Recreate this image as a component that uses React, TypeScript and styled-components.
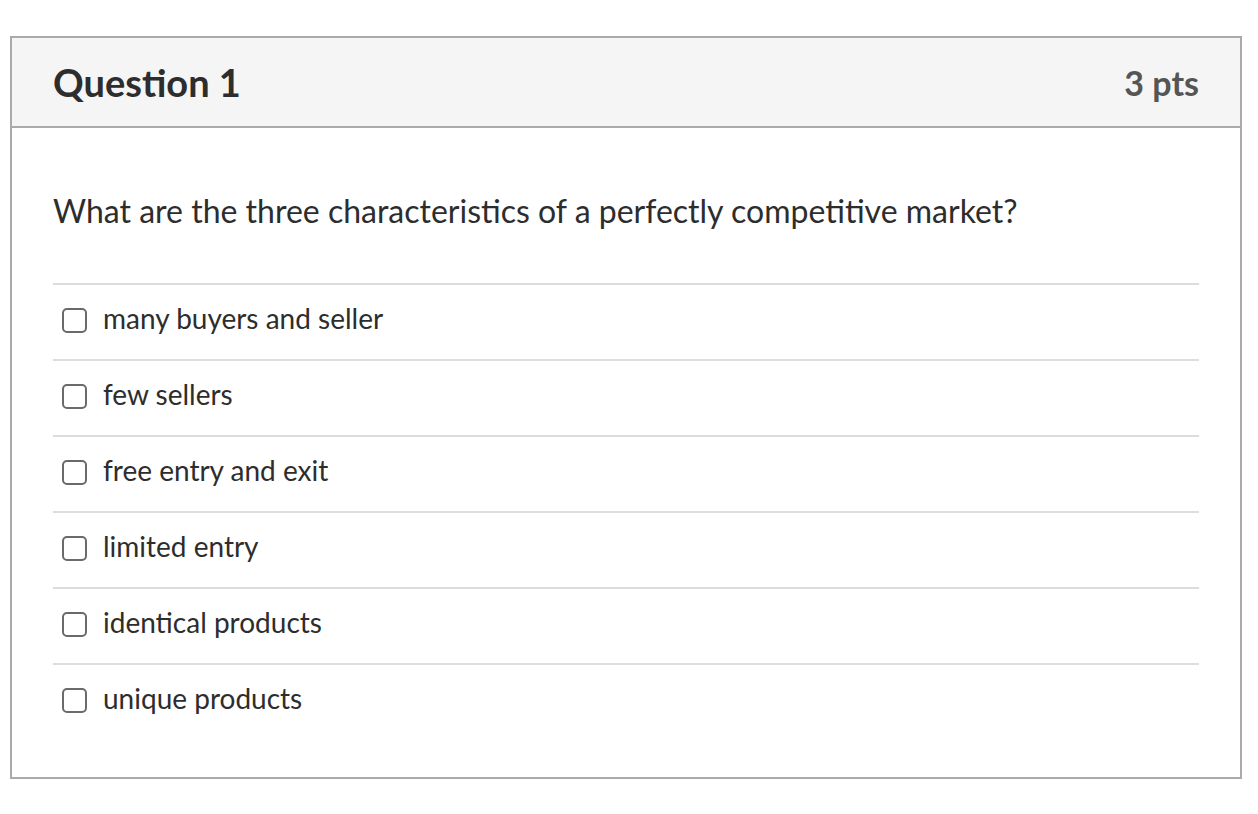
import styled, { createGlobalStyle } from "styled-components";

const GlobalStyle = createGlobalStyle`
  body {
    margin: 0;
    background: #ffffff;
    font-family: Lato, "Liberation Sans", sans-serif;
  }
`;

const Card = styled.div`
  box-sizing: border-box;
  width: 1232px;
  margin: 36px 0 0 10px;
  border: 2px solid #aaaaaa;
  background: #ffffff;
`;

const Header = styled.div`
  display: flex;
  align-items: center;
  justify-content: space-between;
  height: 88px;
  padding: 0 41px;
  background: #f5f5f5;
  border-bottom: 2px solid #aaaaaa;
`;

const Title = styled.h2`
  margin: 0;
  font-size: 38px;
  font-weight: 700;
  color: #2d2d2d;
`;

const Points = styled.span`
  font-size: 34px;
  font-weight: 700;
  color: #555555;
`;

const Body = styled.div`
  padding: 63px 41px 38px;
`;

const QuestionText = styled.p`
  margin: 0 0 52px;
  font-size: 32px;
  line-height: 40px;
  color: #2d2d2d;
`;

const Option = styled.label`
  box-sizing: border-box;
  display: flex;
  align-items: center;
  gap: 16px;
  height: 76px;
  padding: 0 0 8px 9px;
  border-top: 2px solid #dddddd;
  font-size: 28px;
  color: #2d2d2d;
  cursor: pointer;
`;

const Box = styled.span`
  box-sizing: border-box;
  width: 25px;
  height: 25px;
  margin-top: 5px;
  border: 2.5px solid #6a6a6a;
  border-radius: 5px;
  background: #ffffff;
  flex-shrink: 0;
`;

const options = [
  "many buyers and seller",
  "few sellers",
  "free entry and exit",
  "limited entry",
  "identical products",
  "unique products",
];

const App = () => {
  return (
    <>
      <GlobalStyle />
      <Card>
        <Header>
          <Title>Question 1</Title>
          <Points>3 pts</Points>
        </Header>
        <Body>
          <QuestionText>
            What are the three characteristics of a perfectly competitive market?
          </QuestionText>
          {options.map((o) => (
            <Option key={o}>
              <Box />
              {o}
            </Option>
          ))}
        </Body>
      </Card>
    </>
  );
};

export default App;
